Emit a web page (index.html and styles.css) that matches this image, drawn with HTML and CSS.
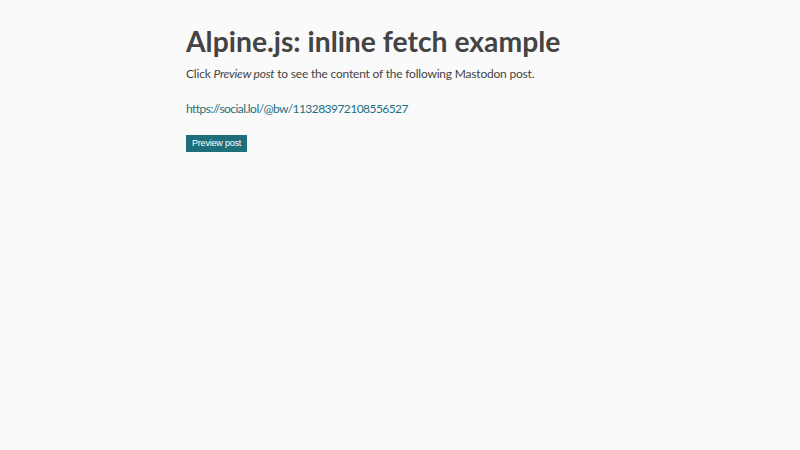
FILE: index.html
```html
<!DOCTYPE html>
<html lang="en">
<head>
<meta charset="UTF-8">
<title>Alpine.js: inline fetch example</title>
<link rel="stylesheet" href="styles.css">
</head>
<body>
<main class="page">
  <h1>Alpine.js: inline fetch example</h1>
  <p>Click <em>Preview post</em> to see the content of the following Mastodon post.</p>
  <p><a class="post-link" href="https://social.lol/@bw/113283972108556527">https://social.lol/@bw/113283972108556527</a></p>
  <button class="preview-btn" type="button">Preview post</button>
</main>
</body>
</html>
```

FILE: styles.css
```css
body {
	margin: 0;
	background: #fafafa;
	color: #444;
	font-family: Lato, "Noto Sans", sans-serif;
	font-size: 12px;
	letter-spacing: -0.2px;
	line-height: 1.5;
}
.page {
	max-width: 428px;
	margin: 0 auto;
	padding: 20px 0;
}
h1 {
	font-size: 28.3px;
	letter-spacing: 0;
	line-height: 1.2;
	margin: 5px 0 6px;
}
p {
	margin: 0 0 17px;
}
a {
	color: #1e6f7c;
	text-decoration: none;
}
.post-link {
	letter-spacing: -0.55px;
}
.preview-btn {
	display: block;
	font-family: "Liberation Sans", Arial, sans-serif;
	font-size: 9px;
	letter-spacing: -0.2px;
	background: #1e6f7c;
	color: #fff;
	border: none;
	padding: 3px 6px 4px;
	margin: 0;
}
```
